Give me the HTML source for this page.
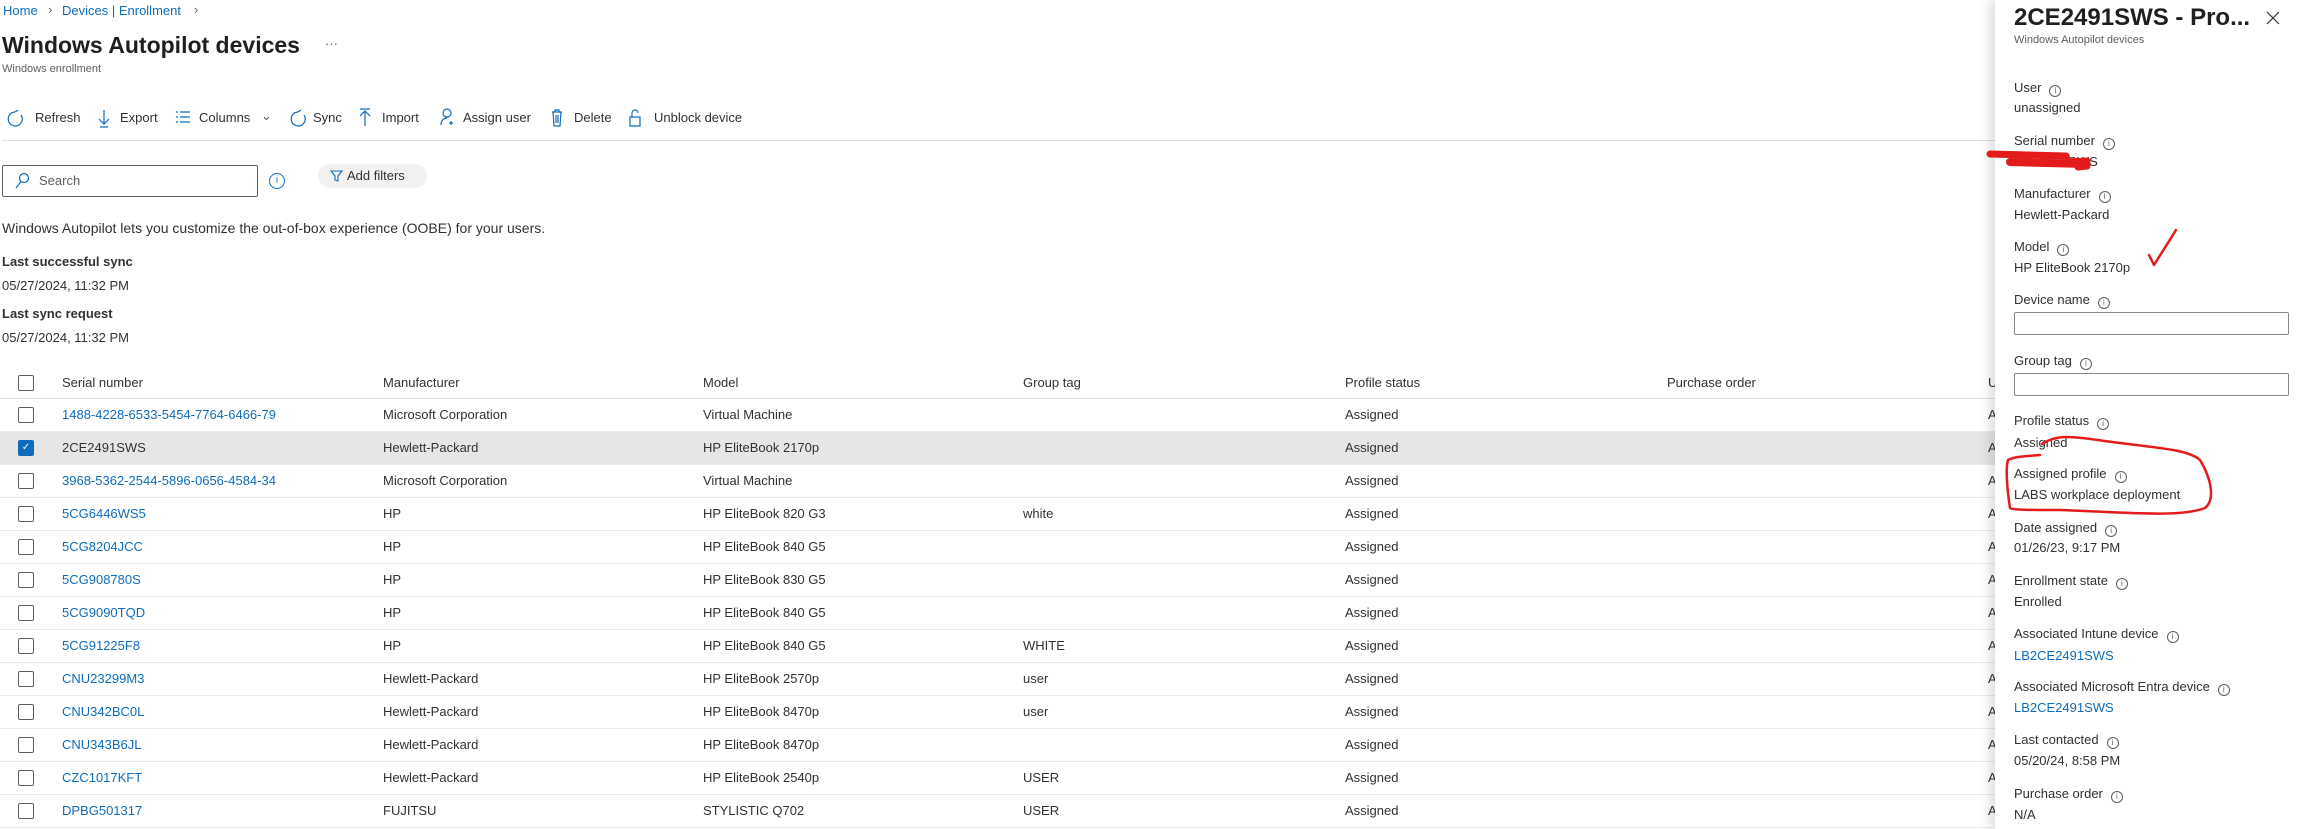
<!DOCTYPE html>
<html><head><meta charset="utf-8"><style>
*{box-sizing:border-box;margin:0;padding:0}
body{width:2302px;height:829px;overflow:hidden;background:#fff;font-family:"Segoe UI","Liberation Sans",sans-serif;color:#323130;font-size:13px;position:relative}
.a{position:absolute;white-space:nowrap}
.lk{color:#0f6cbd}
.ic{position:absolute}
.row{position:absolute;left:0;width:1995px;height:33px;border-bottom:1px solid #edebe9}
.cb{position:absolute;left:18px;width:16px;height:16px;border:1px solid #605e5c;border-radius:2px;background:#fff}
.c{position:absolute;top:8px}
.lbl{position:absolute;left:2014px;font-size:13px;color:#323130}
.inf{display:inline-block;width:12px;height:12px;border:1px solid #605e5c;border-radius:50%;font-size:8px;line-height:10px;text-align:center;margin-left:8px;vertical-align:-1px;color:#605e5c}
</style></head><body>
<div class="a lk" style="left:3px;top:3px;font-size:13px">Home</div>
<div class="a" style="left:48px;top:2px;color:#605e5c">›</div>
<div class="a lk" style="left:62px;top:3px">Devices | Enrollment</div>
<div class="a" style="left:194px;top:2px;color:#605e5c">›</div>
<div class="a" style="left:2px;top:32px;font-size:23px;font-weight:600;color:#201f1e">Windows Autopilot devices</div>
<div class="a" style="left:325px;top:36px;color:#605e5c">···</div>
<div class="a" style="left:2px;top:63px;font-size:11px;color:#605e5c">Windows enrollment</div>

<svg class="ic" style="left:0;top:106px" width="780" height="24" fill="none" stroke="#0f6cbd" stroke-width="1.2">
<path d="M15 6a7 7 0 1 0 6 3M15 6l3-2"/>
<path d="M104 4v14M99 13l5 5 5-5M100 21h8"/>
<path d="M176 6h2M176 11h2M176 16h2M180 6h10M180 11h10M180 16h10"/>
<path d="M298 6a7 7 0 1 0 6 3M298 6l3-2"/>
<path d="M365 5v15M360 10l5-5 5 5M360 3h10"/>
<circle cx="447" cy="7" r="4"/><path d="M441 19c0-5 3-7 6-7M449 17h4M451 15v4"/>
<path d="M552 6h10M555 6V4h4v2M553 6l1 14h6l1-14M556 9v8M558 9v8"/>
<path d="M630 11h10v9h-10zM632 11V7a3 3 0 0 1 6 0"/>
</svg>
<div class="a" style="left:35px;top:110px">Refresh</div>
<div class="a" style="left:120px;top:110px">Export</div>
<div class="a" style="left:199px;top:110px">Columns</div>
<div class="a" style="left:261px;top:108px;color:#605e5c">⌄</div>
<div class="a" style="left:313px;top:110px">Sync</div>
<div class="a" style="left:382px;top:110px">Import</div>
<div class="a" style="left:463px;top:110px">Assign user</div>
<div class="a" style="left:574px;top:110px">Delete</div>
<div class="a" style="left:654px;top:110px">Unblock device</div>
<div class="a" style="left:2px;top:140px;width:1995px;height:1px;background:#e1dfdd"></div>

<div class="a" style="left:2px;top:165px;width:256px;height:32px;border:1px solid #605e5c;border-radius:2px"></div>
<svg class="ic" style="left:14px;top:172px" width="16" height="18" fill="none" stroke="#0f6cbd" stroke-width="1.2"><circle cx="10" cy="6" r="4.5"/><path d="M7 9.5L2 16"/></svg>
<div class="a" style="left:39px;top:173px;color:#605e5c">Search</div>
<div class="a" style="left:269px;top:173px;width:16px;height:16px;border:1.2px solid #0f6cbd;border-radius:50%;color:#0f6cbd;font-size:10px;text-align:center;line-height:14px">i</div>
<div class="a" style="left:318px;top:164px;width:109px;height:24px;background:#f3f2f1;border-radius:12px"></div>
<svg class="ic" style="left:330px;top:169px" width="14" height="14" fill="none" stroke="#0f6cbd" stroke-width="1.1"><path d="M1 2h11L8 7v5L5 11V7z"/></svg>
<div class="a" style="left:347px;top:168px">Add filters</div>

<div class="a" style="left:2px;top:220px;font-size:14px">Windows Autopilot lets you customize the out-of-box experience (OOBE) for your users.</div>
<div class="a" style="left:2px;top:254px;font-weight:600">Last successful sync</div>
<div class="a" style="left:2px;top:278px">05/27/2024, 11:32 PM</div>
<div class="a" style="left:2px;top:306px;font-weight:600">Last sync request</div>
<div class="a" style="left:2px;top:330px">05/27/2024, 11:32 PM</div>

<div class="row" style="top:365px;height:34px;border-bottom:1px solid #e1dfdd">
<div class="cb" style="top:10px"></div>
<div class="c" style="left:62px;top:10px">Serial number</div><div class="c" style="left:383px;top:10px">Manufacturer</div><div class="c" style="left:703px;top:10px">Model</div><div class="c" style="left:1023px;top:10px">Group tag</div><div class="c" style="left:1345px;top:10px">Profile status</div><div class="c" style="left:1667px;top:10px">Purchase order</div><div class="c" style="left:1988px;top:10px">User</div>
</div>

<div id="rows"></div>
<script>
var d=[["1488-4228-6533-5454-7764-6466-79","Microsoft Corporation","Virtual Machine",""],
["2CE2491SWS","Hewlett-Packard","HP EliteBook 2170p",""],
["3968-5362-2544-5896-0656-4584-34","Microsoft Corporation","Virtual Machine",""],
["5CG6446WS5","HP","HP EliteBook 820 G3","white"],
["5CG8204JCC","HP","HP EliteBook 840 G5",""],
["5CG908780S","HP","HP EliteBook 830 G5",""],
["5CG9090TQD","HP","HP EliteBook 840 G5",""],
["5CG91225F8","HP","HP EliteBook 840 G5","WHITE"],
["CNU23299M3","Hewlett-Packard","HP EliteBook 2570p","user"],
["CNU342BC0L","Hewlett-Packard","HP EliteBook 8470p","user"],
["CNU343B6JL","Hewlett-Packard","HP EliteBook 8470p",""],
["CZC1017KFT","Hewlett-Packard","HP EliteBook 2540p","USER"],
["DPBG501317","FUJITSU","STYLISTIC Q702","USER"]];
var h="";
d.forEach(function(r,i){var t=399+i*33,s=i==1;
h+='<div class="row" style="top:'+t+'px;'+(s?'background:#e6e6e6;':'')+'">'+
(s?'<div class="cb" style="top:8px;background:#0f6cbd;border-color:#0f6cbd;color:#fff;font-size:10px;text-align:center;line-height:14px">✓</div>':'<div class="cb" style="top:8px"></div>')+
'<div class="c" style="left:62px;'+(s?'':'color:#0f6cbd')+'">'+r[0]+'</div><div class="c" style="left:383px">'+r[1]+'</div><div class="c" style="left:703px">'+r[2]+'</div><div class="c" style="left:1023px">'+r[3]+'</div><div class="c" style="left:1345px">Assigned</div><div class="c" style="left:1988px">All</div></div>';});
document.getElementById('rows').innerHTML=h;
</script>

<div class="a" style="left:1995px;top:0;width:307px;height:829px;background:#fff;box-shadow:-6px 0 10px rgba(0,0,0,0.12)"></div>
<div class="a" style="left:2014px;top:4px;font-size:24px;font-weight:600;color:#201f1e">2CE2491SWS - Pro...</div>
<svg class="ic" style="left:2266px;top:11px" width="14" height="14" stroke="#323130" stroke-width="1.2"><path d="M1 1l12 12M13 1L1 13"/></svg>
<div class="a" style="left:2014px;top:34px;font-size:11px;color:#605e5c">Windows Autopilot devices</div>

<div class="lbl" style="top:80px">User<span class="inf">i</span></div>
<div class="lbl" style="top:100px">unassigned</div>
<div class="lbl" style="top:133px">Serial number<span class="inf">i</span></div>
<div class="lbl" style="top:154px">2CE2491SWS</div>
<div class="lbl" style="top:186px">Manufacturer<span class="inf">i</span></div>
<div class="lbl" style="top:207px">Hewlett-Packard</div>
<div class="lbl" style="top:239px">Model<span class="inf">i</span></div>
<div class="lbl" style="top:260px">HP EliteBook 2170p</div>
<div class="lbl" style="top:292px">Device name<span class="inf">i</span></div>
<div class="a" style="left:2014px;top:312px;width:275px;height:23px;border:1px solid #8a8886;border-radius:2px"></div>
<div class="lbl" style="top:353px">Group tag<span class="inf">i</span></div>
<div class="a" style="left:2014px;top:373px;width:275px;height:23px;border:1px solid #8a8886;border-radius:2px"></div>
<div class="lbl" style="top:413px">Profile status<span class="inf">i</span></div>
<div class="lbl" style="top:435px">Assigned</div>
<div class="lbl" style="top:466px">Assigned profile<span class="inf">i</span></div>
<div class="lbl" style="top:487px">LABS workplace deployment</div>
<div class="lbl" style="top:520px">Date assigned<span class="inf">i</span></div>
<div class="lbl" style="top:540px">01/26/23, 9:17 PM</div>
<div class="lbl" style="top:573px">Enrollment state<span class="inf">i</span></div>
<div class="lbl" style="top:594px">Enrolled</div>
<div class="lbl" style="top:626px">Associated Intune device<span class="inf">i</span></div>
<div class="lbl lk" style="top:648px;color:#0f6cbd">LB2CE2491SWS</div>
<div class="lbl" style="top:679px">Associated Microsoft Entra device<span class="inf">i</span></div>
<div class="lbl lk" style="top:700px;color:#0f6cbd">LB2CE2491SWS</div>
<div class="lbl" style="top:732px">Last contacted<span class="inf">i</span></div>
<div class="lbl" style="top:753px">05/20/24, 8:58 PM</div>
<div class="lbl" style="top:786px">Purchase order<span class="inf">i</span></div>
<div class="lbl" style="top:807px">N/A</div>

<svg class="ic" style="left:0;top:0" width="2302" height="829" fill="none" stroke="#e31b1b" stroke-linecap="round" stroke-linejoin="round">
<path d="M1990 154 L2066 156 L2068 162 L2087 161 L2087 166 L2078 167" stroke-width="7"/>
<path d="M2010 162 L2085 164" stroke-width="8"/>
<path d="M2149 255 L2154 265 L2176 230" stroke-width="2.5"/>
<path d="M2042 444 C2060 432 2080 438 2120 443 C2170 449 2190 451 2200 460 C2212 480 2215 500 2205 508 C2180 518 2120 512 2060 510 C2030 510 2012 510 2010 508 C2008 495 2005 470 2008 460 C2015 456 2030 456 2040 455" stroke-width="2.5"/>
</svg>
</body></html>
